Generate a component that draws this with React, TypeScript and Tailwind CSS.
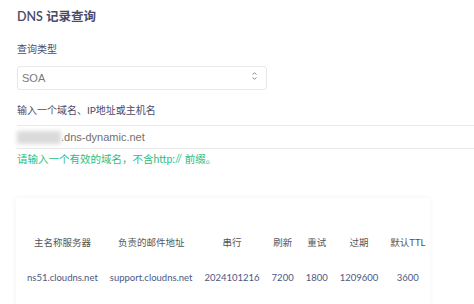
import { useState } from 'react';

const headers = ['主名称服务器', '负责的邮件地址', '串行', '刷新', '重试', '过期', '默认TTL'];
const row = ['ns51.cloudns.net', 'support.cloudns.net', '2024101216', '7200', '1800', '1209600', '3600'];

export default function App() {
  const [type, setType] = useState('SOA');

  return (
    <div
      className="w-[474px] h-[304px] overflow-hidden bg-white"
      style={{ fontFamily: 'Lato, "Noto Sans CJK SC", sans-serif' }}
    >
      <div className="pl-[17px] pt-[7px]">
        <h1 className="text-[12.5px] leading-[20px] font-semibold text-[#4b4b68]">DNS 记录查询</h1>

        {/* 查询类型 */}
        <div className="mt-[15px] text-[10px] leading-[14px] text-[#4b4b68]">查询类型</div>
        <div className="relative mt-[8px] w-[250px] h-[24px]">
          <select
            value={type}
            onChange={e => setType(e.target.value)}
            className="w-full h-full appearance-none rounded-[3px] border border-[#e8e8e8] bg-white pl-[4px] text-[11px] text-[#7a7a7a] outline-none"
            style={{ fontFamily: '"Liberation Sans", sans-serif' }}
          >
            <option>A</option>
            <option>SOA</option>
          </select>
          <svg className="absolute right-[10px] top-[8px]" width="5" height="8" viewBox="0 0 5 8">
            <path d="M0.5 2.5 L2.5 0.8 L4.5 2.5" fill="none" stroke="#888" strokeWidth="1" />
            <path d="M0.5 5.5 L2.5 7.2 L4.5 5.5" fill="none" stroke="#888" strokeWidth="1" />
          </svg>
        </div>

        {/* 域名输入 */}
        <div className="mt-[15px] text-[10px] leading-[14px] text-[#4b4b68]">输入一个域名、IP地址或主机名</div>
        <div className="mt-[8px] h-[24px] border-y border-[#e8e8e8] flex items-center">
          <span className="inline-block w-[44px] h-[13px] bg-[#dadada] blur-[2px]" />
          <span
            className="text-[11px] text-[#707070]"
            style={{ fontFamily: '"Liberation Sans", sans-serif' }}
          >
            .dns-dynamic.net
          </span>
        </div>
        <div className="mt-[3px] text-[10.5px] leading-[14px] text-[#2bbd7e]">请输入一个有效的域名，不含http:// 前缀。</div>
      </div>

      {/* 结果 */}
      <div className="ml-[16px] mt-[32px] w-[414px] h-[120px] bg-white shadow-[0_0_6px_rgba(0,0,0,0.05)] pl-[5px] pt-[28px]">
        <table className="border-collapse">
          <thead>
            <tr>
              {headers.map(h => (
                <th key={h} className="h-[35px] px-[6px] text-[9.5px] font-normal text-[#555] whitespace-nowrap">
                  {h}
                </th>
              ))}
            </tr>
          </thead>
          <tbody>
            <tr>
              {row.map(v => (
                <td key={v} className="h-[35px] px-[6px] text-center text-[9.5px] text-[#4d5783] whitespace-nowrap">
                  {v}
                </td>
              ))}
            </tr>
          </tbody>
        </table>
      </div>
    </div>
  );
}
